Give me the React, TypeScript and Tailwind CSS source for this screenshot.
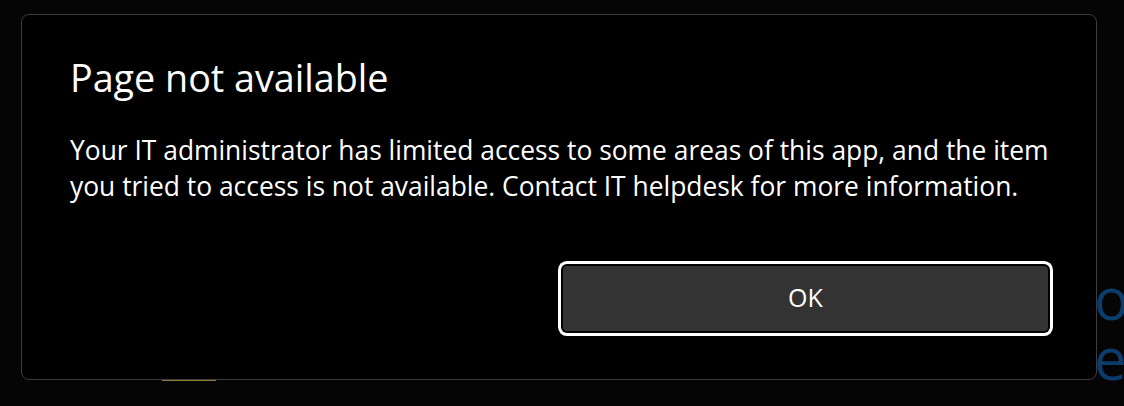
import React from "react";

export default function App() {
  return (
    <div
      className="relative w-[1124px] h-[406px] overflow-hidden bg-[#050505]"
      style={{ fontFamily: '"Open Sans", "Noto Sans", sans-serif' }}
    >
      {/* background app fragments */}
      <div className="absolute left-[1094px] top-[268px] text-[58px] leading-[60px] text-[#0c3c6c] font-normal select-none">
        <div>o</div>
        <div>e</div>
      </div>
      <div className="absolute left-[162px] top-[379px] w-[54px] h-[2px] bg-[#8f7a34]" />

      <div className="relative ml-[21px] mt-[14px] w-[1076px] h-[366px] rounded-lg border border-[#3c3c3c] bg-black px-[48px] pt-[37px] text-white">
        <h1 className="text-[37.7px] leading-[52px] font-normal">Page not available</h1>
        <p className="mt-[27.5px] text-[26.4px] leading-[36px] whitespace-nowrap">
          Your IT administrator has limited access to some areas of this app, and the item
          <br />
          you tried to access is not available. Contact IT helpdesk for more information.
        </p>
        <div className="mt-[62px] grid grid-cols-2 gap-2">
          <div />
          <button className="h-[65px] rounded-[4px] bg-[#333333] text-[25px] text-white shadow-[0_0_0_2px_#000,0_0_0_5px_#fff]">
            OK
          </button>
        </div>
      </div>
    </div>
  );
}
